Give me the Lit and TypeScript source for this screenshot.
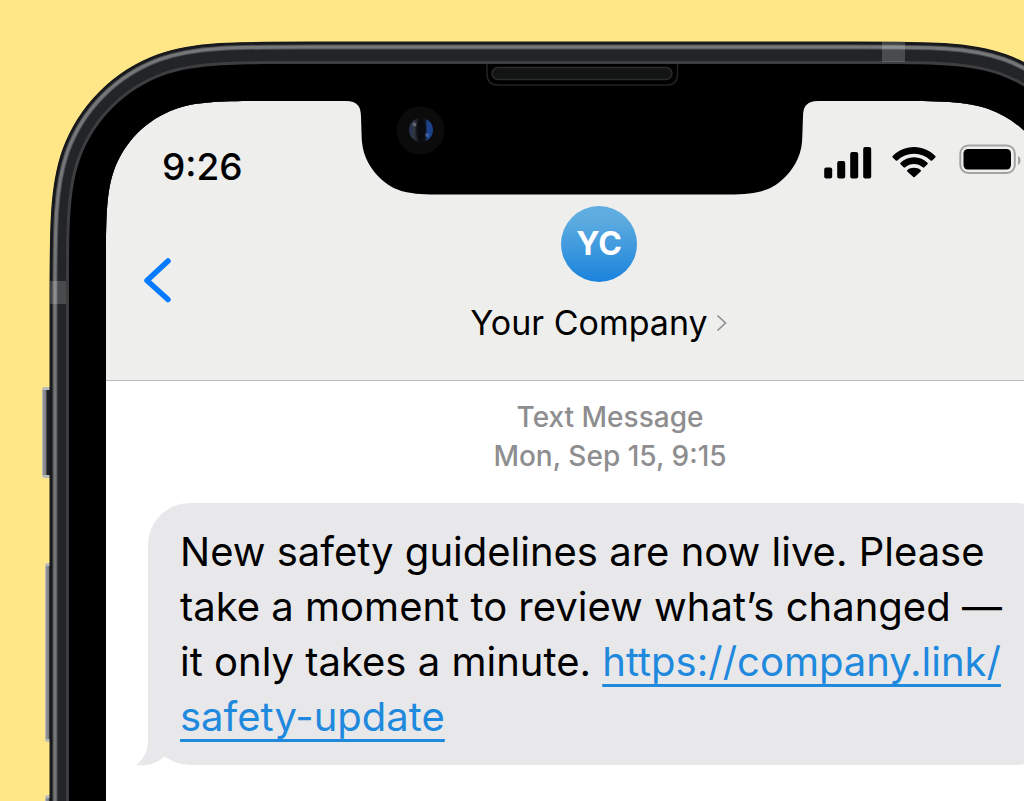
import { LitElement, html, svg, css } from "lit";
import { customElement, property } from "lit/decorators.js";

const FRAME_BOTTOM = 4000;
const FRAME_RIGHT = 1164;

/** Upper part of a phone outline with continuous ("squircle") corners. */
function outline(left: number, top: number, r: number): string {
  const right = FRAME_RIGHT - left;
  const L = (k: number) => left + k * r;
  const R = (k: number) => right - k * r;
  const T = (k: number) => top + k * r;
  return [
    `M${left} ${FRAME_BOTTOM}V${T(1.5287)}`,
    `C${left} ${T(1.0885)} ${left} ${T(0.842)} ${L(0.0749)} ${T(0.6315)}`,
    `C${L(0.1691)} ${T(0.3728)} ${L(0.3728)} ${T(0.1691)} ${L(0.6315)} ${T(0.0749)}`,
    `C${L(0.842)} ${top} ${L(1.0885)} ${top} ${L(1.5287)} ${top}`,
    `H${R(1.5287)}`,
    `C${R(1.0885)} ${top} ${R(0.842)} ${top} ${R(0.6315)} ${T(0.0749)}`,
    `C${R(0.3728)} ${T(0.1691)} ${R(0.1691)} ${T(0.3728)} ${R(0.0749)} ${T(0.6315)}`,
    `C${right} ${T(0.842)} ${right} ${T(1.0885)} ${right} ${T(1.5287)}`,
    `V${FRAME_BOTTOM}Z`,
  ].join("");
}

const body = outline(50, 42, 171);
const screen = outline(106, 101, 109);

@customElement("phone-frame")
class PhoneFrame extends LitElement {
  static styles = css`
    :host { display: block; }
    .drawing { display: block; width: 1164px; height: 100%; }
  `;

  render() {
    return html`<svg class="drawing" aria-hidden="true" fill="none">
      <defs>
        <linearGradient id="lens" x1="0" x2="1">
          <stop offset="0" stop-color="#1f3355" />
          <stop offset="0.2" stop-color="#303640" />
          <stop offset="0.45" stop-color="#0c0d10" />
          <stop offset="0.68" stop-color="#10131c" />
          <stop offset="0.76" stop-color="#1c438f" />
          <stop offset="1" stop-color="#1c3f86" />
        </linearGradient>
        <linearGradient id="key" x1="0" x2="1">
          <stop offset="0" stop-color="#8b8d8e" />
          <stop offset="0.2" stop-color="#8b8d8e" />
          <stop offset="0.4" stop-color="#1d2022" />
          <stop offset="1" stop-color="#1d2022" />
        </linearGradient>
        <clipPath id="body-clip"><path d=${body} /></clipPath>
      </defs>
      ${[[42, 387, 91], [45, 563, 179], [45, 795, 179]].map(
        ([x, y, h]) => svg`
          <rect x=${x} y=${y} width="12" height=${h} rx="3" fill="#b9bbbb" />
          <rect x=${x + 1} y=${y + 3} width="11" height=${h - 6} fill="url(#key)" />`
      )}
      <path fill="#222427" fill-rule="evenodd" d=${body + screen} />
      <path stroke="#17191c" stroke-width="3" d=${outline(51, 43, 170)} />
      <path stroke="#4b4d4f" stroke-width="5" d=${outline(55, 47, 166)} />
      <path stroke="#757677" stroke-width="3" d=${outline(55, 47, 166)} />
      <path fill="#3d3e40" fill-rule="evenodd" d=${outline(66, 61, 153) + screen} />
      <path fill="#000" fill-rule="evenodd" d=${outline(69, 64, 150) + screen} />
      <g clip-path="url(#body-clip)" fill="#fff" fill-opacity="0.18">
        <rect x="882" y="42" width="23" height="20" />
        <rect x="50" y="281" width="16" height="23" />
      </g>
      <path fill="#000" d="M346 99V101C357 101 361 106 361 117C361.500 129 361.500 136 362 142C363 157 372 171 381 179C393 190 405 194.500 436 194.500H728C759 194.500 771 190 783 179C792 171 801 157 802 142C802.500 136 802.500 129 803 117C803 106 807 101 818 101V99Z" />
      <path stroke="#222" stroke-width="1.500" d="M487 64V74Q487 85 498 85H667Q677.500 85 677.500 74V64" />
      <rect x="492" y="67.500" width="180" height="12" rx="6" fill="#131414" stroke="#2b2b2b" stroke-width="1.500" />
      <circle cx="420.500" cy="130.500" r="24" fill="#0b0b0c" />
      <circle cx="421" cy="130" r="12" fill="url(#lens)" />
      <ellipse cx="421" cy="130" rx="5" ry="11" fill="#08090b" fill-opacity="0.6" />
      <circle cx="414.500" cy="124.500" r="2" fill="#80858e" fill-opacity="0.6" />
      <circle cx="427" cy="135" r="2" fill="#6783b5" fill-opacity="0.5" />
    </svg>`;
  }
}

@customElement("status-bar")
class StatusBar extends LitElement {
  @property() time = "";

  static styles = css`
    :host {
      display: flex;
      align-items: flex-start;
      justify-content: space-between;
      padding: 0 36px 0 56px;
    }
    .time { font-size: 37px; font-weight: 500; line-height: 52px; }
    .icons { display: block; width: 198px; height: 36px; margin-top: 3px; }
  `;

  render() {
    return html`
      <time class="time">${this.time}</time>
      <svg class="icons" viewBox="824 144 198 36" role="img" aria-label="Signal, Wi-Fi and battery full">
        <rect x="824.200" y="167.500" width="8" height="11" rx="2" />
        <rect x="837.200" y="161" width="8" height="17.500" rx="2" />
        <rect x="850.200" y="152" width="8" height="26.500" rx="2" />
        <rect x="863.200" y="147" width="8" height="31.500" rx="2" />
        <path d="M914 147C922.500 147 930 150.500 935.300 156Q936 156.800 935.300 157.500L932.200 160.500Q931.500 161.200 930.700 160.500C926 156 920.500 153.700 914 153.700S902 156 897.300 160.500Q896.500 161.200 895.800 160.500L892.700 157.500Q892 156.800 892.700 156C898 150.500 905.500 147 914 147Z" />
        <path d="M914 157.300C919.500 157.300 924 159.400 927.500 162.800Q928.200 163.500 927.500 164.200L924.400 167.300Q923.600 168 922.800 167.300C920.300 165 917.400 163.900 914 163.900S907.700 165 905.200 167.300Q904.400 168 903.600 167.300L900.500 164.200Q899.800 163.500 900.500 162.800C904 159.400 908.500 157.300 914 157.300Z" />
        <path d="M914 167.700C916.800 167.700 919 168.500 920.600 170Q921.400 170.700 920.700 171.400L914.700 177Q914 177.600 913.300 177L907.300 171.400Q906.600 170.700 907.400 170C909 168.500 911.200 167.700 914 167.700Z" />
        <rect x="960.300" y="145.500" width="54.500" height="27.500" rx="8" fill="none" stroke="#a3a3a2" stroke-width="2" />
        <rect x="963.500" y="149" width="47.500" height="20.500" rx="4.500" />
        <path d="M1018 156V165C1021.500 163.500 1021.500 157.500 1018 156Z" fill="#a3a3a2" />
      </svg>
    `;
  }
}

@customElement("chat-header")
class ChatHeader extends LitElement {
  @property() name = "";
  @property() initials = "";

  static styles = css`
    :host { display: flex; align-items: center; padding: 0 34px 0 36px; }
    .back {
      flex: none;
      margin-top: 8px;
      padding: 0;
      border: 0;
      background: none;
    }
    .arrow { display: block; width: 32px; height: 48px; }
    .contact {
      flex: 1;
      display: flex;
      flex-direction: column;
      align-items: center;
      gap: 19px;
    }
    .avatar {
      width: 76px;
      height: 76px;
      border-radius: 50%;
      background: linear-gradient(#5fade0 15%, #1a83dd);
      color: #fff;
      font-size: 32px;
      font-weight: 700;
      line-height: 76px;
      text-align: center;
    }
    .name {
      display: flex;
      align-items: center;
      gap: 8px;
      padding: 0;
      border: 0;
      background: none;
      color: #000;
      font: inherit;
      font-size: 34px;
      line-height: 44px;
    }
    .more { width: 12px; height: 18px; }
  `;

  render() {
    return html`
      <button class="back" aria-label="Back">
        <svg class="arrow" viewBox="0 0 32 48" fill="none" stroke="#067bff" stroke-width="5.500" stroke-linecap="round" stroke-linejoin="round">
          <path d="M26 5L5 24.500L26 43.500" />
        </svg>
      </button>
      <div class="contact">
        <div class="avatar">${this.initials}</div>
        <button class="name">
          ${this.name}
          <svg class="more" viewBox="0 0 12 18" fill="none" stroke="#8e8e90" stroke-width="1.600" aria-hidden="true">
            <path d="M1.500 1.500L9.500 9L1.500 16.500" />
          </svg>
        </button>
      </div>
    `;
  }
}

@customElement("message-bubble")
class MessageBubble extends LitElement {
  static styles = css`
    :host {
      display: block;
      position: relative;
      padding: 21px 32px;
      border-radius: 42px;
      background: #e8e8ea;
      font-size: 40px;
      line-height: 55px;
    }
    .tail {
      position: absolute;
      left: -12px;
      bottom: -1px;
      width: 40px;
      height: 42px;
    }
  `;

  render() {
    return html`
      <svg class="tail" viewBox="136 724 40 42" fill="#e8e8ea" aria-hidden="true">
        <path d="M148 724V738C148 750 145 758 136 765C147 766.500 156 763.500 163.500 757.500L174 748L160 724Z" />
      </svg>
      <slot></slot>
    `;
  }
}

@customElement("app-root")
class AppRoot extends LitElement {
  static styles = css`
    :host {
      display: flex;
      flex-direction: column;
      position: relative;
      box-sizing: border-box;
      min-height: 100vh;
      overflow: hidden;
      padding: 101px 0 0 106px;
      background: #ffe788;
      color: #000;
      font-family: Inter, "Liberation Sans", sans-serif;
    }
    .frame {
      position: absolute;
      inset: 0 auto 0 0;
      pointer-events: none;
    }
    .screen {
      flex: 1;
      display: flex;
      flex-direction: column;
      margin-right: -34px;
      background: #fff;
    }
    .top {
      padding: 40px 0 35px;
      border-bottom: 1px solid #b9b9ba;
      background: #eeeeed;
    }
    .chat { margin-top: 13px; }
    .thread {
      display: flex;
      flex-direction: column;
      gap: 27px;
      padding: 17px 0 36px 42px;
    }
    .stamp {
      margin: 0;
      padding-left: 14px;
      color: #8e8e90;
      font-size: 28px;
      font-weight: 500;
      line-height: 39px;
      text-align: center;
    }
    .text { margin: 0; }
    .link {
      color: #1f89de;
      text-decoration: underline;
      text-decoration-thickness: 3px;
      text-decoration-skip-ink: none;
      text-underline-offset: 8px;
    }
  `;

  render() {
    return html`
      <main class="screen">
        <header class="top">
          <status-bar time="9:26"></status-bar>
          <chat-header class="chat" name="Your Company" initials="YC"></chat-header>
        </header>
        <section class="thread">
          <p class="stamp">Text Message<br />Mon, Sep 15, 9:15</p>
          <message-bubble>
            <p class="text">
              New safety guidelines are now live. Please take a moment to review what’s changed —
              it only takes a minute.
              <a class="link" href="https://company.link/safety-update">https://company.link/<wbr />safety-update</a>
            </p>
          </message-bubble>
        </section>
      </main>
      <phone-frame class="frame"></phone-frame>
    `;
  }
}
